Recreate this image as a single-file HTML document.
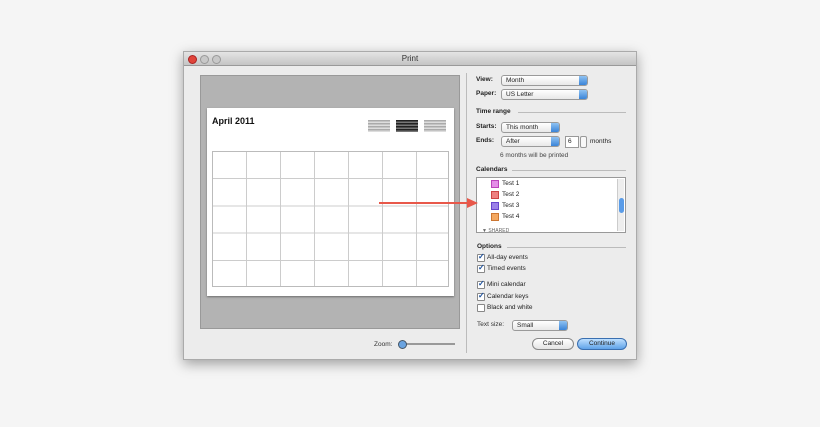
<!DOCTYPE html>
<html><head><style>
body{margin:0;width:820px;height:427px;background:#f5f5f5;position:relative;overflow:hidden;font-family:"Liberation Sans",sans-serif;}
.a{position:absolute}
.win{left:183px;top:51px;width:454px;height:309px;background:#ececec;box-shadow:0 4px 12px rgba(0,0,0,.35);border:1px solid #aaa;box-sizing:border-box}
.tb{left:0;top:0;width:452px;height:13px;background:linear-gradient(#e4e4e4,#c4c4c4);border-bottom:1px solid #999;font-size:8px;text-align:center;line-height:13px;color:#333}
.dot{width:7px;height:7px;border-radius:50%;top:3px;background:#c8c8c8;border:1px solid #999}
.l{font-size:6.5px;color:#222}
.pop{height:9px;border:1px solid #9a9a9a;border-radius:3px;background:linear-gradient(#fff,#e8e8e8);font-size:6.5px;line-height:9px;padding-left:4px;box-sizing:content-box}
.pop:after{content:"";position:absolute;right:0;top:0;width:8px;height:9px;background:linear-gradient(#8fc2f2,#3a84d8);border-radius:0 2px 2px 0}
.hr{height:1px;background:#bbb}
.cb{width:6px;height:6px;border:1px solid #888;background:#fff;border-radius:1px}
.ck:after{content:"✓";position:absolute;left:0;top:-3px;font-size:8px;color:#1a4f9c;font-weight:bold}
</style></head><body>
<div class="a win">
 <div class="a tb">Print</div>
 <div class="a dot" style="left:4px;background:#e0443a;border-color:#a22"></div>
 <div class="a dot" style="left:16px"></div>
 <div class="a dot" style="left:28px"></div>
</div>
<div class="a" style="left:200px;top:75px;width:260px;height:254px;background:#b3b3b3;border:1px solid #999;box-sizing:border-box"></div>
<div class="a" style="left:207px;top:108px;width:247px;height:188px;background:#fff;box-shadow:0 1px 2px rgba(0,0,0,.4)"></div>
<div class="a" style="left:212px;top:116px;font-size:9px;font-weight:bold;color:#111">April 2011</div>
<div class="a" style="left:368px;top:120px;width:22px;height:12px;background:repeating-linear-gradient(#aaa 0 1.5px,#ddd 1.5px 3px)"></div>
<div class="a" style="left:396px;top:120px;width:22px;height:12px;background:repeating-linear-gradient(#222 0 1.5px,#777 1.5px 3px)"></div>
<div class="a" style="left:424px;top:120px;width:22px;height:12px;background:repeating-linear-gradient(#aaa 0 1.5px,#ddd 1.5px 3px)"></div>
<div class="a" style="left:212px;top:151px;width:237px;height:136px;border:1px solid #bbb;box-sizing:border-box;background:
repeating-linear-gradient(90deg,transparent 0 33px,#ccc 33px 34px),repeating-linear-gradient(transparent 0 26.2px,#ccc 26.2px 27.2px)"></div>
<div class="a" style="left:374px;top:341px;font-size:6.5px;color:#333">Zoom:</div>
<div class="a" style="left:402px;top:343px;width:53px;height:2px;background:#999"></div>
<div class="a" style="left:398px;top:340px;width:7px;height:7px;border-radius:50%;background:#6aa3e0;border:1px solid #456"></div>
<div class="a" style="left:466px;top:73px;width:1px;height:280px;background:#bbb"></div>
<div class="a l" style="left:476px;top:76px;font-weight:bold">View:</div>
<div class="a pop l" style="left:501px;top:75px;width:81px">Month</div>
<div class="a l" style="left:476px;top:90px;font-weight:bold">Paper:</div>
<div class="a pop l" style="left:501px;top:89px;width:81px">US Letter</div>
<div class="a l" style="left:476px;top:108px;font-weight:bold">Time range</div>
<div class="a hr" style="left:518px;top:112px;width:108px"></div>
<div class="a l" style="left:476px;top:123px;font-weight:bold">Starts:</div>
<div class="a pop l" style="left:501px;top:122px;width:53px">This month</div>
<div class="a l" style="left:476px;top:137px;font-weight:bold">Ends:</div>
<div class="a pop l" style="left:501px;top:136px;width:53px">After</div>
<div class="a l" style="left:565px;top:136px;width:10px;height:10px;line-height:10px;border:1px solid #999;background:#fff;padding-left:2px">6</div>
<div class="a" style="left:580px;top:136px;width:5px;height:10px;border:1px solid #999;border-radius:2px;background:#f8f8f8"></div>
<div class="a l" style="left:590px;top:138px">months</div>
<div class="a l" style="left:500px;top:152px;color:#444">6 months will be printed</div>
<div class="a l" style="left:476px;top:166px;font-weight:bold">Calendars</div>
<div class="a hr" style="left:512px;top:170px;width:114px"></div>
<div class="a" style="left:476px;top:177px;width:150px;height:56px;border:1px solid #999;background:#fff;box-sizing:border-box;overflow:hidden">
 <div class="a" style="right:1px;top:1px;width:6px;height:52px;background:#eee;border-left:1px solid #ccc"></div>
 <div class="a" style="right:1px;top:20px;width:5px;height:15px;background:#5a9ce8;border-radius:3px"></div>
 <div class="a" style="left:14px;top:2px;width:6px;height:6px;background:#e48ee8;border:1px solid #b4b"></div><div class="a l" style="left:25px;top:2px">Test 1</div>
 <div class="a" style="left:14px;top:13px;width:6px;height:6px;background:#ee8080;border:1px solid #c44"></div><div class="a l" style="left:25px;top:13px">Test 2</div>
 <div class="a" style="left:14px;top:24px;width:6px;height:6px;background:#9a80e8;border:1px solid #64c"></div><div class="a l" style="left:25px;top:24px">Test 3</div>
 <div class="a" style="left:14px;top:35px;width:6px;height:6px;background:#f4a860;border:1px solid #c73"></div><div class="a l" style="left:25px;top:35px">Test 4</div>
 <div class="a" style="left:5px;top:50px;font-size:5px;color:#666">▼ SHARED</div>
</div>
<div class="a l" style="left:477px;top:243px;font-weight:bold">Options</div>
<div class="a hr" style="left:507px;top:247px;width:119px"></div>
<div class="a cb ck" style="left:477px;top:254px"></div><div class="a l" style="left:487px;top:254px">All-day events</div>
<div class="a cb ck" style="left:477px;top:265px"></div><div class="a l" style="left:487px;top:265px">Timed events</div>
<div class="a cb ck" style="left:477px;top:281px"></div><div class="a l" style="left:487px;top:281px">Mini calendar</div>
<div class="a cb ck" style="left:477px;top:293px"></div><div class="a l" style="left:487px;top:293px">Calendar keys</div>
<div class="a cb" style="left:477px;top:304px"></div><div class="a l" style="left:487px;top:304px">Black and white</div>
<div class="a l" style="left:477px;top:321px;color:#333">Text size:</div>
<div class="a pop l" style="left:512px;top:320px;width:50px">Small</div>
<div class="a l" style="left:532px;top:338px;width:40px;height:10px;border:1px solid #888;border-radius:6px;background:linear-gradient(#fff,#e4e4e4);text-align:center;line-height:10px">Cancel</div>
<div class="a l" style="left:577px;top:338px;width:48px;height:10px;border:1px solid #3a6fb0;border-radius:6px;background:linear-gradient(#bfe0ff,#5fa2e8);text-align:center;line-height:10px">Continue</div>
<div class="a" style="left:379px;top:202px;width:90px;height:2px;background:#e8584a"></div>
<div class="a" style="left:467px;top:198px;width:0;height:0;border-left:11px solid #e8584a;border-top:5px solid transparent;border-bottom:5px solid transparent"></div>
</body></html>
